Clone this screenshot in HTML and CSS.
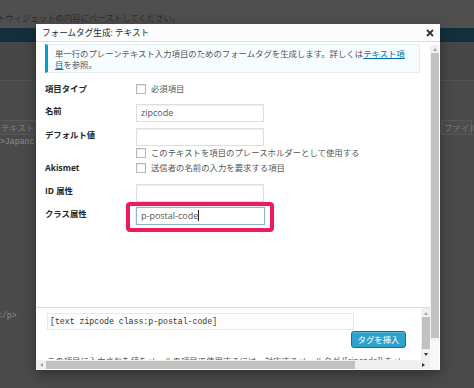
FILE: index.html
```html
<!DOCTYPE html>
<html lang="ja">
<head>
  <meta charset="UTF-8" />
  <title>フォームタグ生成: テキスト</title>
  <link rel="stylesheet" href="styles.css">
</head>
<body>

<!-- 背景の管理画面 (オーバーレイで暗くなっている) -->
<div class="backdrop">
  <div class="bg-notice">トウィジェットの内容にペーストしてください。</div>
  <div class="bg-band"></div>
  <div class="bg-top"></div>
  <div class="bg-toolbar">
    <span class="bg-btn bg-btn-left">テキスト</span>
    <span class="bg-btn bg-btn-right">ファイル</span>
  </div>
  <div class="bg-code">&gt;Japanc</div>
  <div class="bg-code bg-end">&lt;/p&gt;</div>
</div>

<div class="dialog">
  <div class="dialog-title">
    <span>フォームタグ生成: テキスト</span>
    <svg class="close" width="8" height="8" viewBox="0 0 8 8"><path d="M1 1L7 7M7 1L1 7" stroke="#333" stroke-width="1.8"/></svg>
  </div>

  <div class="dialog-body">
    <div class="dialog-main">
      <div class="dialog-content">
        <div class="notice">
          単一行のプレーンテキスト入力項目のためのフォームタグを生成します。詳しくは<a href="#">テキスト項目</a>を参照。
        </div>

        <div class="form">
          <div class="form-row">
            <div class="form-label">項目タイプ</div>
            <div class="form-field">
              <label class="check-line"><span class="check"></span>必須項目</label>
            </div>
          </div>
          <div class="form-row row-name">
            <div class="form-label">名前</div>
            <div class="form-field"><div class="field">zipcode</div></div>
          </div>
          <div class="form-row row-default">
            <div class="form-label">デフォルト値</div>
            <div class="form-field">
              <div class="field"></div>
              <label class="check-line"><span class="check"></span>このテキストを項目のプレースホルダーとして使用する</label>
            </div>
          </div>
          <div class="form-row row-akismet">
            <div class="form-label">Akismet</div>
            <div class="form-field">
              <label class="check-line"><span class="check"></span>送信者の名前の入力を要求する項目</label>
            </div>
          </div>
          <div class="form-row row-id">
            <div class="form-label">ID 属性</div>
            <div class="form-field"><div class="field"></div></div>
          </div>
          <div class="form-row row-class">
            <div class="form-label">クラス属性</div>
            <div class="form-field"><div class="field field-focus">p-postal-code<span class="caret"></span></div></div>
          </div>
        </div>
      </div>

      <div class="dialog-footer">
        <div class="footer-pane">
          <div class="footer-scroll">
            <div class="tag-code">[text zipcode class:p-postal-code]</div>
            <div class="tag-actions"><button class="btn-insert">タグを挿入</button></div>
            <div class="mail-note">この項目に入力された値をメールの項目で使用するには、対応するメールタグ ([zipcode]) をメ</div>
          </div>
          <div class="vbar vbar-small">
            <span class="arrow arrow-up"></span>
            <span class="thumb thumb-small"></span>
            <span class="arrow arrow-down dark"></span>
          </div>
        </div>
        <div class="hbar">
          <span class="arrow arrow-left"></span>
          <span class="thumb thumb-h"></span>
          <span class="arrow arrow-right dark"></span>
        </div>
      </div>
    </div>

    <div class="vbar vbar-main">
      <span class="arrow arrow-up"></span>
      <span class="thumb thumb-main"></span>
    </div>
  </div>
</div>

</body>
</html>
```

FILE: styles.css
```css
body {
  margin: 0;
  width: 474px;
  height: 388px;
  overflow: hidden;
  position: relative;
  background: #4a4a4a;
  font-family: "Open Sans", "Noto Sans CJK JP", sans-serif;
  font-size: 8.4px;
  color: #444;
}

/* 背景 */
.bg-notice {
  height: 28px;
  box-sizing: border-box;
  padding-top: 12px;
  line-height: 12px;
  margin-left: -3px;
  color: #2b2b2b;
  background: #4f4f4f;
  white-space: nowrap;
}
.bg-band {
  height: 14px;
  background: #12303c;
}
.bg-top {
  height: 38px;
  background: #474747;
  border-bottom: 1px solid #535353;
}
.bg-toolbar {
  display: flex;
  justify-content: space-between;
  margin-top: 39px;
}
.bg-btn {
  height: 15px;
  box-sizing: border-box;
  line-height: 13px;
  border: 1px solid #595959;
  background: #4d4d4d;
  color: #7b7b7b;
  padding: 0 4px;
  white-space: nowrap;
}
.bg-btn-left {
  margin-left: -4px;
  width: 44px;
}
.bg-btn-right {
  margin-right: 2px;
  width: 31px;
  padding: 0 2px;
}
.bg-code {
  font-family: "Liberation Mono", monospace;
  font-size: 8.2px;
  line-height: 12px;
  margin-top: 1px;
  color: #8c8c8c;
}
.bg-end {
  margin-top: 162px;
  margin-left: -3px;
}

/* ダイアログ */
.dialog {
  position: absolute;
  left: 36px;
  top: 24px;
  width: 404px;
  height: 346px;
  background: #fff;
  display: flex;
  flex-direction: column;
  box-shadow: 0 4px 12px rgba(0,0,0,0.35);
}
.dialog-title {
  height: 18px;
  box-sizing: border-box;
  border-bottom: 1px solid #ddd;
  background: #fcfcfc;
  display: flex;
  align-items: center;
  justify-content: space-between;
  padding: 0 6px;
  color: #23282d;
  font-size: 8.6px;
  flex: none;
}
.dialog-body {
  flex: 1;
  display: flex;
  min-height: 0;
}
.dialog-main {
  flex: 1;
  display: flex;
  flex-direction: column;
  min-width: 0;
}
.dialog-content {
  flex: 1;
  padding: 2px 10px 0 9px;
  overflow: hidden;
}

.notice {
  border: 1px solid #e5eef2;
  border-left: 3px solid #00a0d2;
  background: #f7fcfe;
  padding: 3px 8px 2px 7px;
  line-height: 11px;
  color: #555;
}
.notice a {
  color: #0073aa;
}

.form {
  margin-top: 9px;
}
.form-row {
  display: flex;
  align-items: flex-start;
}
.form-label {
  width: 91px;
  flex: none;
  font-weight: bold;
  line-height: 14px;
  color: #23282d;
}
.form-field {
  flex: 1;
  min-width: 0;
}
.row-name { margin-top: 8px; }
.row-default { margin-top: 6px; }
.row-akismet { margin-top: 1px; }
.row-id { margin-top: 9px; }
.row-class { margin-top: 5px; }

.check-line {
  display: flex;
  align-items: center;
  height: 14px;
  line-height: 14px;
  color: #555;
  white-space: nowrap;
}
.check {
  width: 10px;
  height: 10px;
  box-sizing: border-box;
  border: 1px solid #b4b9be;
  background: #fff;
  box-shadow: inset 0 1px 2px rgba(0,0,0,0.1);
  margin-right: 5px;
  flex: none;
}
.field {
  width: 128px;
  height: 18px;
  box-sizing: border-box;
  border: 1px solid #ddd;
  box-shadow: inset 0 1px 2px rgba(0,0,0,0.07);
  padding: 0 4px;
  font-size: 9px;
  line-height: 16px;
  color: #555;
}
.field-focus {
  position: relative;
  border-color: #8fb7cb;
  box-shadow: 0 0 1px rgba(30,140,190,0.6);
  width: 129px;
}
.field-focus::after {
  content: "";
  position: absolute;
  left: -11px;
  top: -6px;
  right: -10px;
  bottom: -8px;
  border: 4px solid #ea1b5f;
  border-radius: 4px;
}
.caret {
  display: inline-block;
  width: 1px;
  height: 11px;
  background: #222;
  vertical-align: middle;
  margin-top: -2px;
}

/* フッター */
.dialog-footer {
  height: 63px;
  box-sizing: border-box;
  border-top: 1px solid #ddd;
  display: flex;
  flex-direction: column;
  flex: none;
}
.footer-pane {
  flex: 1;
  display: flex;
  min-height: 0;
}
.footer-scroll {
  flex: 1;
  min-width: 0;
  overflow: hidden;
  padding: 5px 15px 0 11px;
}
.tag-code {
  width: 307px;
  height: 17px;
  box-sizing: border-box;
  border: 1px solid #e8e8e8;
  background: #fdfdfd;
  padding-left: 2px;
  font-family: "Liberation Mono", monospace;
  font-size: 8.2px;
  line-height: 15px;
  color: #333;
  white-space: nowrap;
}
.tag-actions {
  display: flex;
  justify-content: flex-end;
  margin-top: 1px;
}
.btn-insert {
  height: 17px;
  width: 55px;
  padding: 0;
  border: 1px solid #0074a2;
  border-radius: 3px;
  background: #2ea2cc;
  box-shadow: inset 0 1px 0 rgba(120,200,230,0.5);
  color: #fff;
  font-family: "Open Sans", "Noto Sans CJK JP", sans-serif;
  font-size: 8.4px;
  line-height: 15px;
}
.mail-note {
  margin-top: 7px;
  line-height: 12px;
  white-space: nowrap;
  color: #555;
}

/* スクロールバー */
.vbar {
  width: 9px;
  flex: none;
  background: #f0f0f0;
  display: flex;
  flex-direction: column;
  align-items: center;
}
.vbar-main {
  margin: 3px 1px 0 0;
  background: linear-gradient(#f0f0f0 0, #f0f0f0 296px, #f8f8f8 296px);
}
.vbar-small {
  padding-top: 1px;
}
.hbar {
  height: 9px;
  margin-bottom: 1px;
  background: #f0f0f0;
  display: flex;
  align-items: center;
}
.thumb {
  background: #c1c1c1;
  display: block;
}
.thumb-main {
  width: 8px;
  height: 285px;
  margin-top: 2px;
}
.thumb-small {
  width: 8px;
  height: 32px;
  margin-top: 2px;
}
.thumb-h {
  width: 309px;
  height: 8px;
  margin-left: 3px;
}
.arrow {
  display: block;
  width: 0;
  height: 0;
  flex: none;
}
.arrow-up {
  margin-top: 3px;
  border-left: 2.5px solid transparent;
  border-right: 2.5px solid transparent;
  border-bottom: 3px solid #a3a3a3;
}
.arrow-down {
  margin-top: 4px;
  border-left: 2.5px solid transparent;
  border-right: 2.5px solid transparent;
  border-top: 3px solid #a3a3a3;
}
.arrow-left {
  margin-left: 4px;
  border-top: 2.5px solid transparent;
  border-bottom: 2.5px solid transparent;
  border-right: 3px solid #a3a3a3;
}
.arrow-right {
  margin-left: auto;
  margin-right: 5px;
  border-top: 2.5px solid transparent;
  border-bottom: 2.5px solid transparent;
  border-left: 3px solid #a3a3a3;
}
.arrow-down.dark { border-top-color: #333; }
.arrow-right.dark { border-left-color: #333; }
```
